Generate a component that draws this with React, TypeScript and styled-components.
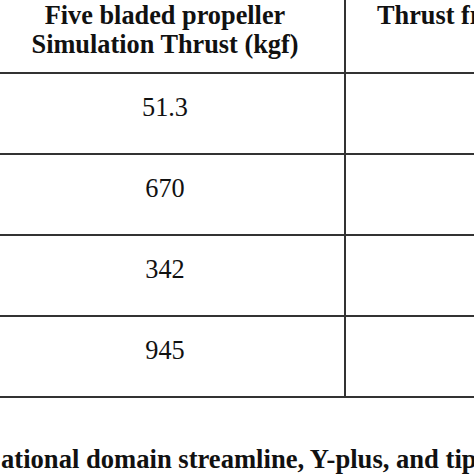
import React from 'react';
import styled, { createGlobalStyle } from 'styled-components';

const GlobalStyle = createGlobalStyle`
  html, body {
    margin: 0;
    padding: 0;
    background: #fff;
    overflow: hidden;
  }
  body {
    font-family: "Liberation Serif", "Times New Roman", serif;
    color: #111;
  }
`;

const rows = ['51.3', '670', '342', '945'];

const App = () => {
  return (
    <Page>
      <GlobalStyle />
      <Table>
        <HeadCell $first>
          Five bladed propeller
          <br />
          Simulation Thrust (kgf)
        </HeadCell>
        <HeadCell>Thrust from experiment</HeadCell>
        {rows.map((value) => (
          <React.Fragment key={value}>
            <Cell $first>{value}</Cell>
            <Cell />
          </React.Fragment>
        ))}
      </Table>
      <Caption>ational domain streamline, Y-plus, and tip vortex</Caption>
    </Page>
  );
};

const Page = styled.div`
  width: 474px;
  height: 474px;
  overflow: hidden;
`;

const Table = styled.div`
  display: grid;
  grid-template-columns: 360px 300px;
  grid-template-rows: 74px repeat(4, 81px);
  margin-left: -14px;
`;

const HeadCell = styled.div<{ $first?: boolean }>`
  box-sizing: border-box;
  border-bottom: 2px solid #333;
  border-right: ${(p) => (p.$first ? '2px solid #333' : 'none')};
  padding: 1px 0 0 ${(p) => (p.$first ? '0' : '31px')};
  font-size: 26.3px;
  font-weight: bold;
  line-height: 29px;
  text-align: ${(p) => (p.$first ? 'center' : 'left')};
  white-space: nowrap;
  color: #111;
`;

const Cell = styled.div<{ $first?: boolean }>`
  box-sizing: border-box;
  border-bottom: 2px solid #333;
  border-right: ${(p) => (p.$first ? '2px solid #333' : 'none')};
  padding-top: 19px;
  font-size: 26.3px;
  line-height: 29px;
  text-align: center;
  color: #111;
`;

const Caption = styled.p`
  margin: 47px 0 0 1px;
  font-size: 26.6px;
  font-weight: bold;
  line-height: 29px;
  white-space: nowrap;
  color: #111;
`;

export default App;
